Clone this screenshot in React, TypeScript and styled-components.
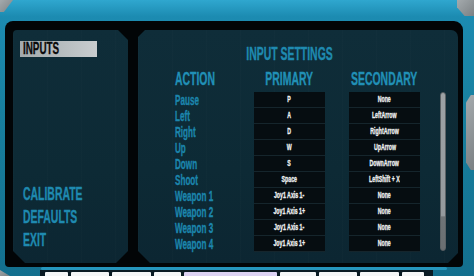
import React from "react";
import styled, { createGlobalStyle } from "styled-components";

const GlobalStyle = createGlobalStyle`
  html, body {
    margin: 0;
    padding: 0;
    background: #000;
  }
  body {
    width: 474px;
    height: 276px;
    overflow: hidden;
    font-family: "Liberation Sans", Arial, sans-serif;
  }
`;

const TEAL_TEXT = "#1f8ab0";

const Frame = styled.div`
  position: relative;
  box-sizing: border-box;
  width: 474px;
  height: 276px;
  padding: 21px 11px 0 5px;
  display: flex;
  flex-direction: column;
  background: linear-gradient(180deg, #2fa7cf 0%, #1c8bb1 6%, #18809f 40%, #136f8e 100%);
  border-radius: 10px 4px 0 0;
`;

const Inner = styled.div`
  box-sizing: border-box;
  height: 246px;
  padding: 9px 5px 4px 8px;
  display: flex;
  gap: 10px;
  background: #020507;
  border-radius: 8px 9px 4px 4px;
`;

const Panel = styled.div<{ $width: number }>`
  box-sizing: border-box;
  width: ${(p) => p.$width}px;
  height: 100%;
  background:
    repeating-linear-gradient(90deg, rgba(255, 255, 255, 0.012) 0 1px, transparent 1px 34px),
    linear-gradient(180deg, #0f2d39 0%, #0d2a35 60%, #0c2632 100%);
  display: flex;
  flex-direction: column;
`;

const LeftPanel = styled(Panel)`
  border-radius: 4px 0 0 0;
  clip-path: polygon(0 0, 105px 0, 115px 10px, 115px 221px, 103px 233px, 12px 233px, 0 221px);
`;

const RightPanel = styled(Panel)`
  padding: 14px 0 0 37px;
  border-radius: 0 7px 0 0;
  clip-path: polygon(7px 0, 320px 0, 320px 223px, 310px 233px, 12px 233px, 0 221px, 0 7px);
`;

// the game font is very narrow: squeeze a bold sans to match
const Squeeze = styled.span<{ $origin?: string }>`
  display: inline-block;
  flex: none;
  white-space: nowrap;
  -webkit-text-stroke: 0.35px currentColor;
  transform: scaleX(0.58);
  transform-origin: ${(p) => p.$origin ?? "left"} center;
`;

const Tag = styled.div`
  box-sizing: border-box;
  margin: 11px 0 0 7px;
  width: 77px;
  height: 16px;
  padding-left: 3px;
  background: linear-gradient(90deg, #a3aaad 0%, #b7bdbf 55%, #c9cdcf 100%);
  color: #0a0a0a;
  font-size: 17px;
  font-weight: 700;
  line-height: 16px;
`;

const Menu = styled.div`
  margin-top: auto;
  padding: 0 0 11px 10px;
  display: flex;
  flex-direction: column;
`;

const MenuItem = styled.div`
  height: 23px;
  color: ${TEAL_TEXT};
  font-size: 18px;
  font-weight: 700;
  line-height: 23px;
`;

const Centered = styled.div`
  display: flex;
  justify-content: center;
`;

const Title = styled(Centered)`
  width: 229px;
  height: 20px;
  color: ${TEAL_TEXT};
  font-size: 18px;
  font-weight: 700;
  line-height: 20px;
`;

const Columns = styled.div`
  display: grid;
  grid-template-columns: 55px 71px 71px;
  column-gap: 24px;
`;

const HeaderRow = styled(Columns)`
  margin-top: 5px;
  height: 20px;
  color: #2190b6;
  font-size: 18px;
  font-weight: 700;
  line-height: 20px;
`;

const Body = styled.div`
  margin-top: 3px;
  display: flex;
  align-items: flex-start;
`;

const Rows = styled.div`
  display: flex;
  flex-direction: column;
`;

const Row = styled(Columns)`
  height: 16px;
`;

const Label = styled.div`
  color: #1c86ad;
  font-size: 14px;
  font-weight: 700;
  line-height: 16px;
`;

const Key = styled(Centered)`
  box-sizing: border-box;
  height: 16px;
  background: #060d11;
  border-bottom: 1px solid #15252c;
  color: #eef0f0;
  font-size: 9px;
  font-weight: 700;
  line-height: 15px;
`;

const ScrollTrack = styled.div`
  box-sizing: border-box;
  margin: 0 0 0 20px;
  width: 6px;
  height: 159px;
  border-radius: 3px;
  border: 1px solid #5d6366;
  background: linear-gradient(180deg, #9da2a5 0%, #959a9d 78%, #6f7477 79%, #6a6f72 100%);
`;

const BottomLine = styled.div`
  height: 3px;
  margin: 0 16px 0 36px;
  background: #2596bd;
  border-radius: 2px;
`;

const KeyStrip = styled.div`
  box-sizing: border-box;
  height: 6px;
  margin: 0 30px 0 35px;
  padding: 2px 0 0 5px;
  display: flex;
  gap: 3px;
  background: #0a1b24;
`;

const StripKey = styled.div<{ $width: number; $lit?: boolean }>`
  width: ${(p) => p.$width}px;
  height: 100%;
  background: ${(p) => (p.$lit ? "#dcd2f4" : "#f4f6f7")};
  border-radius: 1px 1px 0 0;
`;

const Corner = styled.div<{ $left?: number; $right?: number; $top?: number; $bottom?: number; $w: number; $h: number; $clip: string }>`
  position: absolute;
  ${(p) => (p.$left !== undefined ? `left: ${p.$left}px;` : "")}
  ${(p) => (p.$right !== undefined ? `right: ${p.$right}px;` : "")}
  ${(p) => (p.$top !== undefined ? `top: ${p.$top}px;` : "")}
  ${(p) => (p.$bottom !== undefined ? `bottom: ${p.$bottom}px;` : "")}
  width: ${(p) => p.$w}px;
  height: ${(p) => p.$h}px;
  background: linear-gradient(135deg, #a4aaad, #7b8184);
  clip-path: ${(p) => p.$clip};
`;

const bindings: [string, string, string][] = [
  ["Pause", "P", "None"],
  ["Left", "A", "LeftArrow"],
  ["Right", "D", "RightArrow"],
  ["Up", "W", "UpArrow"],
  ["Down", "S", "DownArrow"],
  ["Shoot", "Space", "LeftShift  +  X"],
  ["Weapon 1", "Joy1 Axis 1-", "None"],
  ["Weapon 2", "Joy1 Axis 1+", "None"],
  ["Weapon 3", "Joy1 Axis 1-", "None"],
  ["Weapon 4", "Joy1 Axis 1+", "None"],
];

const stripKeys = [23, 38, 39, 27, 93, 36, 38, 39, 22];

export default function App() {
  return (
    <>
      <GlobalStyle />
      <Frame>
        <Corner $left={0} $top={0} $w={13} $h={12} $clip="polygon(0 0, 100% 0, 30% 100%, 0 100%)" />
        <Corner $right={0} $top={0} $w={17} $h={16} $clip="polygon(0 0, 100% 0, 100% 100%, 45% 100%, 0 45%)" />
        <Corner $right={0} $top={95} $w={8} $h={75} $clip="polygon(60% 0, 100% 0, 100% 100%, 60% 100%, 0 90%, 0 10%)" />
        <Corner $left={0} $bottom={0} $w={10} $h={10} $clip="polygon(0 40%, 100% 100%, 0 100%)" />
        <Inner>
          <LeftPanel $width={115}>
            <Tag>
              <Squeeze>INPUTS</Squeeze>
            </Tag>
            <Menu>
              {["CALIBRATE", "DEFAULTS", "EXIT"].map((item) => (
                <MenuItem key={item}>
                  <Squeeze>{item}</Squeeze>
                </MenuItem>
              ))}
            </Menu>
          </LeftPanel>
          <RightPanel $width={320}>
            <Title>
              <Squeeze $origin="center">INPUT SETTINGS</Squeeze>
            </Title>
            <HeaderRow>
              <div>
                <Squeeze>ACTION</Squeeze>
              </div>
              <Centered>
                <Squeeze $origin="center">PRIMARY</Squeeze>
              </Centered>
              <Centered>
                <Squeeze $origin="center">SECONDARY</Squeeze>
              </Centered>
            </HeaderRow>
            <Body>
              <Rows>
                {bindings.map(([action, primary, secondary]) => (
                  <Row key={action}>
                    <Label>
                      <Squeeze>{action}</Squeeze>
                    </Label>
                    <Key>
                      <Squeeze $origin="center">{primary}</Squeeze>
                    </Key>
                    <Key>
                      <Squeeze $origin="center">{secondary}</Squeeze>
                    </Key>
                  </Row>
                ))}
              </Rows>
              <ScrollTrack />
            </Body>
          </RightPanel>
        </Inner>
        <BottomLine />
        <KeyStrip>
          {stripKeys.map((w, i) => (
            <StripKey key={i} $width={w} $lit={i === 4} />
          ))}
        </KeyStrip>
      </Frame>
    </>
  );
}
